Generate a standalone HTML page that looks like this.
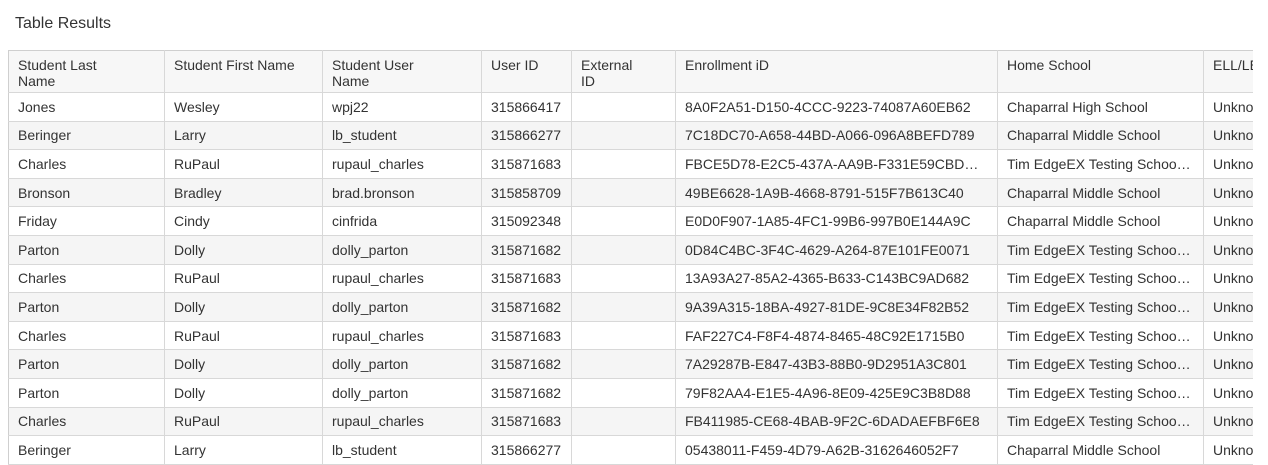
<!DOCTYPE html>
<html><head><style>
body{margin:0;background:#fff;font-family:"Liberation Sans",Arial,sans-serif;color:#333;}
h1{position:absolute;left:15px;top:15px;margin:0;font-size:16px;font-weight:normal;color:#333;}
.wrap{position:absolute;left:8px;top:50px;width:1245px;height:415px;overflow:hidden;}
table{border-collapse:collapse;table-layout:fixed;width:1300px;font-size:14px;}
td,th{border:1px solid #d8d8d8;padding:0 9px;height:27.6px;text-align:left;font-weight:normal;white-space:nowrap;overflow:hidden;}
td:first-child,th:first-child{border-left:1px solid #cfcfcf;}
th{height:35px;vertical-align:top;padding-top:6px;line-height:16px;background:#f7f7f7;border-top:1px solid #cfcfcf;}
tr:nth-child(even) td{background:#f5f5f5;}
</style></head><body>
<h1>Table Results</h1>
<div class="wrap"><table>
<colgroup><col style="width:156px"><col style="width:158px"><col style="width:159px"><col style="width:90px"><col style="width:104px"><col style="width:322px"><col style="width:206px"><col style="width:105px"></colgroup>
<thead><tr><th>Student Last<br>Name</th><th>Student First Name</th><th>Student User<br>Name</th><th>User ID</th><th>External<br>ID</th><th>Enrollment iD</th><th>Home School</th><th>ELL/LEP</th></tr></thead>
<tbody>
<tr><td>Jones</td><td>Wesley</td><td>wpj22</td><td>315866417</td><td></td><td>8A0F2A51-D150-4CCC-9223-74087A60EB62</td><td>Chaparral High School</td><td>Unknown</td></tr>
<tr><td>Beringer</td><td>Larry</td><td>lb_student</td><td>315866277</td><td></td><td>7C18DC70-A658-44BD-A066-096A8BEFD789</td><td>Chaparral Middle School</td><td>Unknown</td></tr>
<tr><td>Charles</td><td>RuPaul</td><td>rupaul_charles</td><td>315871683</td><td></td><td>FBCE5D78-E2C5-437A-AA9B-F331E59CBD…</td><td>Tim EdgeEX Testing Schoo…</td><td>Unknown</td></tr>
<tr><td>Bronson</td><td>Bradley</td><td>brad.bronson</td><td>315858709</td><td></td><td>49BE6628-1A9B-4668-8791-515F7B613C40</td><td>Chaparral Middle School</td><td>Unknown</td></tr>
<tr><td>Friday</td><td>Cindy</td><td>cinfrida</td><td>315092348</td><td></td><td>E0D0F907-1A85-4FC1-99B6-997B0E144A9C</td><td>Chaparral Middle School</td><td>Unknown</td></tr>
<tr><td>Parton</td><td>Dolly</td><td>dolly_parton</td><td>315871682</td><td></td><td>0D84C4BC-3F4C-4629-A264-87E101FE0071</td><td>Tim EdgeEX Testing Schoo…</td><td>Unknown</td></tr>
<tr><td>Charles</td><td>RuPaul</td><td>rupaul_charles</td><td>315871683</td><td></td><td>13A93A27-85A2-4365-B633-C143BC9AD682</td><td>Tim EdgeEX Testing Schoo…</td><td>Unknown</td></tr>
<tr><td>Parton</td><td>Dolly</td><td>dolly_parton</td><td>315871682</td><td></td><td>9A39A315-18BA-4927-81DE-9C8E34F82B52</td><td>Tim EdgeEX Testing Schoo…</td><td>Unknown</td></tr>
<tr><td>Charles</td><td>RuPaul</td><td>rupaul_charles</td><td>315871683</td><td></td><td>FAF227C4-F8F4-4874-8465-48C92E1715B0</td><td>Tim EdgeEX Testing Schoo…</td><td>Unknown</td></tr>
<tr><td>Parton</td><td>Dolly</td><td>dolly_parton</td><td>315871682</td><td></td><td>7A29287B-E847-43B3-88B0-9D2951A3C801</td><td>Tim EdgeEX Testing Schoo…</td><td>Unknown</td></tr>
<tr><td>Parton</td><td>Dolly</td><td>dolly_parton</td><td>315871682</td><td></td><td>79F82AA4-E1E5-4A96-8E09-425E9C3B8D88</td><td>Tim EdgeEX Testing Schoo…</td><td>Unknown</td></tr>
<tr><td>Charles</td><td>RuPaul</td><td>rupaul_charles</td><td>315871683</td><td></td><td>FB411985-CE68-4BAB-9F2C-6DADAEFBF6E8</td><td>Tim EdgeEX Testing Schoo…</td><td>Unknown</td></tr>
<tr><td>Beringer</td><td>Larry</td><td>lb_student</td><td>315866277</td><td></td><td>05438011-F459-4D79-A62B-3162646052F7</td><td>Chaparral Middle School</td><td>Unknown</td></tr>
</tbody></table></div>
</body></html>
